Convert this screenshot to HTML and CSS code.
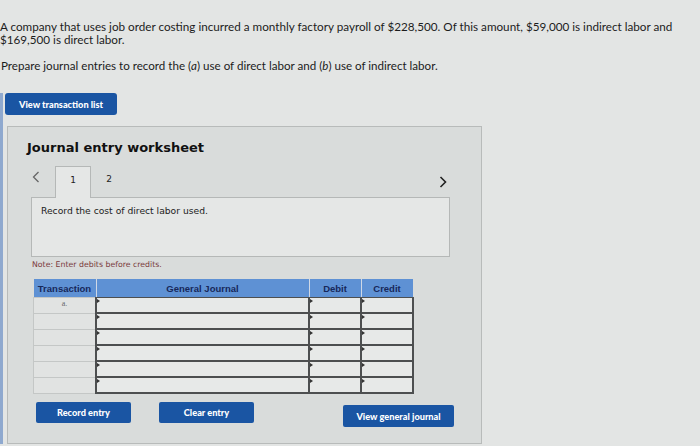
FILE: index.html
```html
<!DOCTYPE html>
<html>
<head>
<meta charset="utf-8">
<link rel="stylesheet" href="styles.css">
</head>
<body>
<div class="intro">
  <p class="q">A company that uses job order costing incurred a monthly factory payroll of $228,500. Of this amount, $59,000 is indirect labor and $169,500 is direct labor.</p>
  <p class="q2">Prepare journal entries to record the (<i>a</i>) use of direct labor and (<i>b</i>) use of indirect labor.</p>
</div>
<div class="work">
  <button class="btn btn-list">View transaction list</button>
  <div class="panel">
    <h2 class="title">Journal entry worksheet</h2>
    <div class="tabs">
      <span class="arrow prev"><svg width="8" height="12" viewBox="0 0 8 12"><path d="M6.5 1 L1.5 6 L6.5 11" fill="none" stroke="#666" stroke-width="1.3"/></svg></span>
      <span class="tab active">1</span>
      <span class="tab">2</span>
      <span class="spacer"></span>
      <span class="arrow next"><svg width="8" height="12" viewBox="0 0 8 12"><path d="M1.5 1 L6.5 6 L1.5 11" fill="none" stroke="#222" stroke-width="1.6"/></svg></span>
    </div>
    <div class="desc">Record the cost of direct labor used.</div>
    <div class="note">Note: Enter debits before credits.</div>
    <table class="jt">
      <thead>
        <tr><th class="c1">Transaction</th><th class="c2">General Journal</th><th class="c3">Debit</th><th class="c4">Credit</th></tr>
      </thead>
      <tbody>
        <tr><td class="tx">a.</td><td class="in"></td><td class="in"></td><td class="in"></td></tr>
        <tr><td class="tx"></td><td class="in"></td><td class="in"></td><td class="in"></td></tr>
        <tr><td class="tx"></td><td class="in"></td><td class="in"></td><td class="in"></td></tr>
        <tr><td class="tx"></td><td class="in"></td><td class="in"></td><td class="in"></td></tr>
        <tr><td class="tx"></td><td class="in"></td><td class="in"></td><td class="in"></td></tr>
        <tr><td class="tx"></td><td class="in"></td><td class="in"></td><td class="in"></td></tr>
      </tbody>
    </table>
    <div class="actions">
      <button class="btn b-rec">Record entry</button>
      <button class="btn b-clr">Clear entry</button>
      <span class="spacer"></span>
      <button class="btn b-view">View general journal</button>
    </div>
  </div>
</div>
</body>
</html>
```

FILE: styles.css
```css
html, body {
  margin: 0;
  padding: 0;
  background: #e3e5e4;
  width: 700px;
  height: 446px;
  overflow: hidden;
}
body {
  font-family: "Lato", "Liberation Sans", sans-serif;
  color: #1c1c1c;
}
.intro {
  padding: 20px 0 0 0;
}
.q {
  margin: 0;
  font-size: 11.7px;
  line-height: 13px;
  width: 690px;
}
.q2 {
  margin: 13px 0 0 1px;
  font-size: 11.6px;
  line-height: 13px;
}
.work {
  margin-top: 21px;
  border-left: 3px solid #8fa9cf;
  padding-left: 2px;
}
.btn {
  border: none;
  background: #1a55a3;
  color: #fff;
  font-family: "Lato", "Liberation Sans", sans-serif;
  font-weight: 900;
  font-size: 9.2px;
  border-radius: 2px;
  padding: 0;
  display: block;
}
.btn-list {
  width: 112px;
  height: 22px;
  border-radius: 3px;
}
.panel {
  margin-top: 11px;
  margin-left: 2px;
  width: 475px;
  height: 318px;
  background: #d9dcdb;
  border: 1px solid #b8bbba;
  box-sizing: border-box;
  padding: 13px 0 0 0;
}
.title {
  margin: 0 0 0 19px;
  font-family: "DejaVu Sans", Verdana, sans-serif;
  font-weight: bold;
  font-size: 13px;
  line-height: 16px;
  color: #111;
}
.tabs {
  display: flex;
  align-items: stretch;
  height: 31px;
  margin: 10px 0 0 23px;
  width: 420px;
}
.arrow {
  display: flex;
  width: 24px;
  padding-left: 1px;
  padding-top: 5px;
  box-sizing: border-box;
}
.arrow.next {
  width: 14px;
  padding: 10px 0 0 2px;
}
.tab {
  width: 36px;
  font-family: "DejaVu Sans", sans-serif;
  font-size: 9px;
  color: #222;
  text-align: center;
  line-height: 26px;
  box-sizing: border-box;
}
.tab.active {
  background: #e5e7e6;
  border: 1px solid #b5b8b7;
  border-bottom: none;
  margin-bottom: -1px;
  position: relative;
  z-index: 1;
}
.spacer { flex: 1; }
.desc {
  margin-left: 23px;
  width: 419px;
  height: 60px;
  box-sizing: border-box;
  background: #e5e7e6;
  border: 1px solid #b5b8b7;
  font-family: "DejaVu Sans", sans-serif;
  font-size: 9.2px;
  padding: 7px 0 0 9px;
  color: #222;
}
.note {
  margin: 3px 0 0 24px;
  font-family: "DejaVu Sans", sans-serif;
  font-size: 7.8px;
  color: #7a3b3b;
  line-height: 10px;
}
.jt {
  margin: 9px 0 0 25px;
  border-collapse: collapse;
  width: 378px;
  table-layout: fixed;
}
.jt th {
  background: #5e91d4;
  color: #17285a;
  font-family: "Liberation Sans", Arial, sans-serif;
  font-weight: bold;
  font-size: 9.5px;
  height: 18px;
  padding: 0;
  border-left: 1px solid #cfd8e6;
}
.jt th.c1 { width: 62px; border-left: none; }
.jt th.c2 { width: 212px; }
.jt th.c3 { width: 51px; }
.jt th.c4 { width: 51px; }
.jt td {
  height: 14px;
  padding: 0;
  position: relative;
}
.jt td.tx {
  background: #e1e3e2;
  border: 1px solid #c4c7c6;
  font-family: "Liberation Serif", serif;
  font-size: 8px;
  color: #666;
  text-align: center;
  vertical-align: top;
  line-height: 12px;
}
.jt td.in {
  background: #e7e9e8;
  border: 2px solid #4d4f50;
  border-top-width: 1px;
}
.jt td.in::before {
  content: "";
  position: absolute;
  left: 0;
  top: 1px;
  border-left: 3px solid #333;
  border-top: 2px solid transparent;
  border-bottom: 2px solid transparent;
}
.actions {
  display: flex;
  align-items: flex-start;
  width: 418px;
  margin: 8px 0 0 28px;
}
.b-rec, .b-clr {
  width: 95px;
  height: 21px;
}
.b-clr { margin-left: 28px; }
.b-view {
  width: 111px;
  height: 22px;
  margin-top: 3px;
}
```
